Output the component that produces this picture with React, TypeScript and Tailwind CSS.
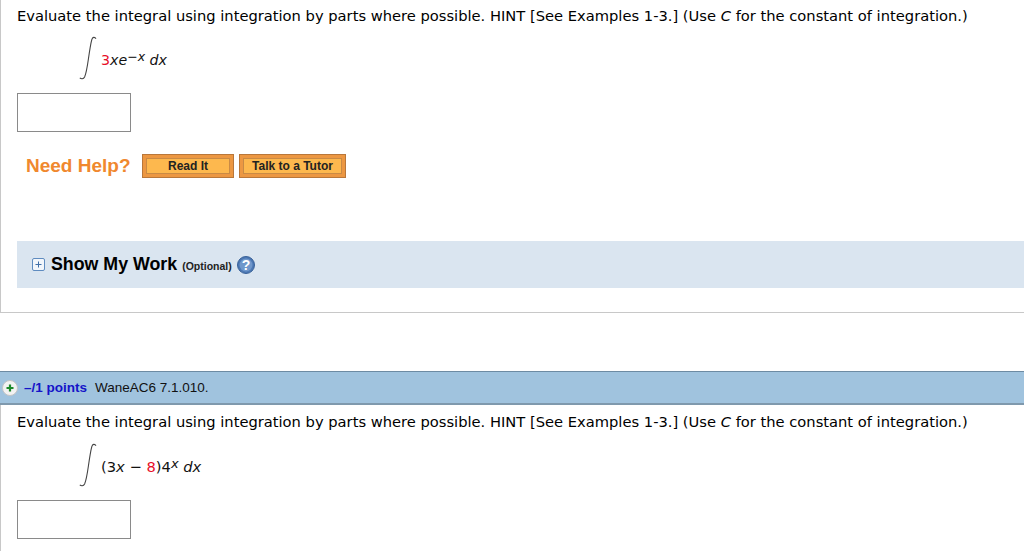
import React from 'react';

const verdana = "font-['DejaVu_Sans','Liberation_Sans',sans-serif]";
const arial = "font-['Liberation_Sans',Arial,sans-serif]";

const IntegralSign = () => (
  <svg width="18" height="44" viewBox="0 0 18 44" className="shrink-0">
    <path d="M17 2.6 C15.6 0.6 13.6 1 12.8 3.6 C11.6 8 10.4 16 9.4 23 C8.4 30 7.4 37 5.6 41 C4.4 43.2 2.2 43.2 0.8 41.8"
      fill="none" stroke="#444" strokeWidth="1.1" />
  </svg>
);

const Question = () => (
  <p className="text-[14.7px] leading-[18px] text-black whitespace-nowrap">
    Evaluate the integral using integration by parts where possible. HINT [See Examples 1-3.] (Use <i>C</i> for the constant of integration.)
  </p>
);

const AnswerBox = () => (
  <div className="w-[114px] h-[39px] bg-white border border-[#8a8a8a]" />
);

const HelpButton = ({ label, width }: { label: string; width: string }) => (
  <button className={`${width} h-[24px] bg-[#ec9742] border border-[#b9773a] p-[3px]`}>
    <span className={`flex items-center justify-center h-full bg-[#fdb84e] border border-[#c98a45] ${arial} text-[12px] font-bold text-[#222]`}>
      {label}
    </span>
  </button>
);

export default function App() {
  return (
    <div className={`w-[1024px] h-[551px] overflow-hidden bg-white ${verdana}`}>
      <section className="h-[313px] border-l border-b border-[#c8c8c8] pl-4 pt-[7px]">
        <Question />
        <div className="flex items-center ml-[62px] mt-[11px] h-[44px]">
          <IntegralSign />
          <span className="ml-[4px] mt-[5px] text-[14.2px] text-[#111] whitespace-nowrap">
            <span className="text-[#e8102a]">3</span><i>xe</i><sup className="text-[12.5px] -top-[4px] relative"><i>−x</i></sup> <i>dx</i>
          </span>
        </div>
        <div className="mt-[13px]"><AnswerBox /></div>
        <div className={`flex items-center mt-[22px] h-[24px] ${arial}`}>
          <span className="ml-[9px] text-[19px] font-bold text-[#f0882e] w-[116px]">Need Help?</span>
          <HelpButton label="Read It" width="w-[92px]" />
          <div className="w-[5px]" />
          <HelpButton label="Talk to a Tutor" width="w-[107px]" />
        </div>
        <div className={`flex items-center mt-[63px] h-[47px] bg-[#dae5f0] pl-[15px] ${arial}`}>
          <span className="flex items-center justify-center w-[13px] h-[13px] rounded-[2px] border border-[#5f8cc0] bg-[#f2f6fb] text-[#3f6fa8]">
            <svg width="7" height="7" viewBox="0 0 7 7"><path d="M3.5 0.5v6M0.5 3.5h6" stroke="currentColor" strokeWidth="1" /></svg>
          </span>
          <span className="ml-[6px] text-[17.8px] font-bold text-black">Show My Work</span>
          <span className="ml-[5px] mt-[4px] text-[10.5px] font-bold text-[#222]">(Optional)</span>
          <svg width="18" height="18" viewBox="0 0 18 18" className="ml-[5px]">
            <circle cx="9" cy="9" r="8.5" fill="#4c78b4" stroke="#3a6299" />
            <circle cx="9" cy="9" r="6.5" fill="#6f97cb" />
            <text x="9" y="14" textAnchor="middle" fontSize="14" fontWeight="700" fill="#fff" fontFamily="Liberation Sans">?</text>
          </svg>
        </div>
      </section>

      <div className={`flex items-center mt-[58px] h-[34px] bg-[#a0c3de] border-t border-b-2 border-t-[#6d8ba3] border-b-[#7f99ad] ${arial}`}>
        <svg width="16" height="16" viewBox="0 0 16 16" className="ml-[2px]">
          <circle cx="8" cy="8" r="7.5" fill="#f2f2f2" stroke="#c4c4c4" />
          <path d="M8 4.5v7M4.5 8h7" stroke="#1f8a2a" strokeWidth="2.2" />
        </svg>
        <span className="ml-[6px] mt-[1px] text-[13.5px] font-bold text-[#1414c8]">–/1 points</span>
        <span className="ml-[8px] mt-[1px] text-[13.5px] text-[#111]">WaneAC6 7.1.010.</span>
      </div>

      <section className="border-l border-[#c8c8c8] pl-4 pt-[8px] h-[146px]">
        <Question />
        <div className="flex items-center ml-[62px] mt-[12px] h-[44px]">
          <IntegralSign />
          <span className="ml-[4px] mt-[4px] text-[14.7px] text-[#111] whitespace-nowrap">
            (3<i>x</i> − <span className="text-[#e8102a]">8</span>)4<sup className="text-[13px] -top-[4px] relative"><i>x</i></sup> <i>dx</i>
          </span>
        </div>
        <div className="mt-[13px]"><AnswerBox /></div>
      </section>
    </div>
  );
}
